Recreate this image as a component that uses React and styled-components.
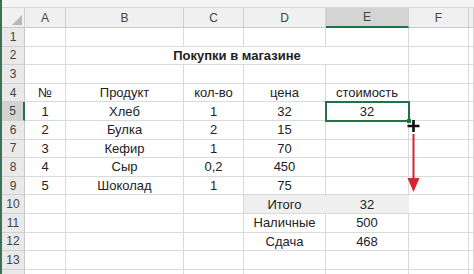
import React from 'react';
import styled, { createGlobalStyle } from 'styled-components';

const GlobalStyle = createGlobalStyle`
  html, body {
    margin: 0;
    padding: 0;
    background: #ffffff;
    overflow: hidden;
  }
`

const Sheet = styled.div`
  position: relative;
  width: 474px;
  height: 274px;
  overflow: hidden;
  border-left: 2px solid #3f6f57;
  box-sizing: border-box;
  font-family: "Liberation Sans", Arial, sans-serif;
  color: #222;
  background: #fff;
`

const TopStrip = styled.div`
  height: 8px;
  background: #f4f4f4;
  border-bottom: 1px solid #d8d8d8;
  box-sizing: border-box;
`

const Grid = styled.div`
  display: grid;
  grid-template-columns: 23px 41px 118px 60px 82px 83px 60px 1fr;
  grid-template-rows: 20px repeat(14, 18.6px);
`

const Corner = styled.div`
  position: relative;
  background: #f0f0f0;
  border-right: 1px solid #d0d0d0;
  border-bottom: 1px solid #c8c8c8;
  box-sizing: border-box;

  &::after {
    content: '';
    position: absolute;
    right: 2px;
    bottom: 2px;
    border-style: solid;
    border-width: 0 0 10px 10px;
    border-color: transparent transparent #b8b8b8 transparent;
  }
`

const ColHead = styled.div`
  display: flex;
  align-items: center;
  justify-content: center;
  font-size: 12px;
  color: #444;
  background: ${p => (p.$active ? '#d4d4d4' : '#f0f0f0')};
  border-right: 1px solid #d0d0d0;
  border-bottom: ${p => (p.$active ? '2px solid #217346' : '1px solid #c8c8c8')};
  box-sizing: border-box;
`

const RowHead = styled.div`
  display: flex;
  align-items: center;
  justify-content: center;
  font-size: 12px;
  color: #444;
  background: ${p => (p.$active ? '#d2d2d2' : '#e9e9e9')};
  border-right: ${p => (p.$active ? '2px solid #217346' : '1px solid #c8c8c8')};
  border-bottom: 1px solid #d0d0d0;
  box-sizing: border-box;
`

const Cell = styled.div`
  position: relative;
  display: flex;
  align-items: center;
  justify-content: center;
  font-size: 13px;
  font-weight: ${p => (p.$bold ? 700 : 400)};
  white-space: nowrap;
  grid-column: ${p => (p.$span ? `span ${p.$span}` : 'auto')};
  background: ${p => (p.$fill ? '#efefef' : '#fff')};
  border-right: 1px solid ${p => (p.$fill ? '#efefef' : '#dadada')};
  border-bottom: 1px solid #dadada;
  box-sizing: border-box;
  ${p =>
    p.$selected &&
    `
    z-index: 1;
    outline: 2px solid #217346;
    outline-offset: -1px;
  `}
`

const FillHandle = styled.span`
  position: absolute;
  right: -3px;
  bottom: -3px;
  width: 4px;
  height: 4px;
  background: #217346;
`

const Overlay = styled.svg`
  position: absolute;
  left: 398px;
  top: 116px;
  z-index: 2;
  pointer-events: none;
`

const cols = ['A', 'B', 'C', 'D', 'E', 'F', '']

// each row: cells for columns A..G
const rows = [
  [],
  [{ text: '' }, { text: 'Покупки в магазине', span: 4, bold: true }, { text: '' }, { text: '' }],
  [],
  ['№', 'Продукт', 'кол-во', 'цена', 'стоимость', '', ''],
  ['1', 'Хлеб', '1', '32', { text: '32', selected: true }, '', ''],
  ['2', 'Булка', '2', '15', '', '', ''],
  ['3', 'Кефир', '1', '70', '', '', ''],
  ['4', 'Сыр', '0,2', '450', '', '', ''],
  ['5', 'Шоколад', '1', '75', '', '', ''],
  ['', '', '', { text: 'Итого', fill: true }, { text: '32', fill: true }, '', ''],
  ['', '', '', 'Наличные', '500', '', ''],
  ['', '', '', 'Сдача', '468', '', ''],
  [],
]

const normalize = row => {
  const cells = row.map(c => (typeof c === 'string' ? { text: c } : c))
  const used = cells.reduce((n, c) => n + (c.span || 1), 0)
  for (let i = used; i < 7; i++) cells.push({ text: '' })
  return cells
}

const App = () => {
  return (
    <>
      <GlobalStyle />
      <Sheet>
        <TopStrip />
        <Grid>
          <Corner />
          {cols.map((c, i) => (
            <ColHead key={i} $active={c === 'E'}>{c}</ColHead>
          ))}
          {rows.map((row, r) => (
            <React.Fragment key={r}>
              <RowHead $active={r === 4}>{r + 1}</RowHead>
              {normalize(row).map((cell, i) => (
                <Cell
                  key={i}
                  $span={cell.span}
                  $bold={cell.bold}
                  $fill={cell.fill}
                  $selected={cell.selected}
                >
                  {cell.text}
                  {cell.selected && <FillHandle />}
                </Cell>
              ))}
            </React.Fragment>
          ))}
          {/* partly visible row below the fold */}
          <RowHead />
          {cols.map((c, i) => (
            <Cell key={`last-${i}`} />
          ))}
        </Grid>
        <Overlay width="28" height="80" viewBox="0 0 28 80">
          {/* fill cursor */}
          <path d="M13.5 4v12M7.5 10h12" stroke="#111" strokeWidth="2.6" />
          {/* drag arrow */}
          <path d="M13.5 18V64" stroke="#d9232e" strokeWidth="2" />
          <path d="M7.5 62h12l-6 14z" fill="#d9232e" />
        </Overlay>
      </Sheet>
    </>
  )
}

export default App
